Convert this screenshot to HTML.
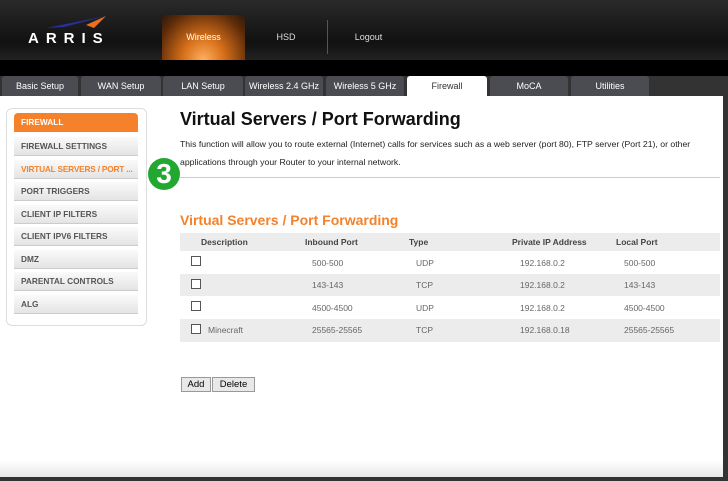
<!DOCTYPE html>
<html><head><style>
*{margin:0;padding:0;box-sizing:border-box}
body{width:728px;height:481px;overflow:hidden;background:#fff;font-family:"Liberation Sans",Arial,sans-serif;position:relative}
.abs{position:absolute}
.hdr{left:0;top:0;width:728px;height:60px;background:linear-gradient(#2a2a2a,#111 70%,#222)}
.band{left:0;top:60px;width:728px;height:16px;background:#000}
.tabrow{left:0;top:76px;width:728px;height:20px;background:#333}
.tab{position:absolute;top:76px;height:20px;background:#4a4c52;color:#fff;font-size:9px;text-align:center;line-height:21px;border-radius:3px 3px 0 0}
.tab.on{background:#fff;color:#333}
.nav{position:absolute;top:15px;height:44px;color:#ddd;font-size:9px;text-align:center;line-height:44px}
.side{left:6px;top:108px;width:141px;height:218px;border:1px solid #ddd;border-radius:6px;background:#fff}
.it{position:absolute;left:14px;width:124px;height:19px;background:linear-gradient(#fafafa,#e4e4e4);border-bottom:1px solid #ccc;font-size:8.3px;font-weight:bold;color:#555;line-height:19px;padding-left:7px;white-space:nowrap;overflow:hidden}
.tr{position:absolute;left:180px;width:540px;font-size:8.5px;color:#666}
.tr span{position:absolute}
.cb{position:absolute;left:11px;width:10px;height:10px;border:1px solid #555;background:#fff}
</style></head><body>
<div class="abs hdr"></div>
<div class="abs" style="left:162px;top:15px;width:83px;height:45px;background:radial-gradient(ellipse at 50% 100%,#ffb060 0%,#d8701a 35%,#5a2a08 80%,#2a1a10 100%)"></div>
<div class="nav" style="left:162px;width:83px;color:#fff">Wireless</div>
<div class="nav" style="left:245px;width:82px">HSD</div>
<div class="abs" style="left:327px;top:20px;width:1px;height:34px;background:#555"></div>
<div class="nav" style="left:327px;width:83px">Logout</div>
<svg class="abs" style="left:44px;top:14px" width="64" height="16"><path d="M2 14 L62 2 L20 13 Z" fill="#2a2fa0"/><path d="M42 11 L62 2 L50 14 Z" fill="#e87020"/></svg>
<div class="abs" style="left:28px;top:30px;color:#fff;font-size:15px;font-weight:bold;letter-spacing:7px">ARRIS</div>
<div class="abs band"></div>
<div class="abs tabrow"></div>
<div class="tab" style="left:2px;width:76px">Basic Setup</div>
<div class="tab" style="left:81px;width:80px">WAN Setup</div>
<div class="tab" style="left:163px;width:80px">LAN Setup</div>
<div class="tab" style="left:245px;width:78px">Wireless 2.4 GHz</div>
<div class="tab" style="left:326px;width:78px">Wireless 5 GHz</div>
<div class="tab on" style="left:407px;width:80px">Firewall</div>
<div class="tab" style="left:490px;width:78px">MoCA</div>
<div class="tab" style="left:571px;width:78px">Utilities</div>
<div class="abs" style="left:723px;top:96px;width:5px;height:385px;background:#333"></div>
<div class="abs" style="left:0;top:460px;width:723px;height:17px;background:linear-gradient(#fff,#e8e8e8)"></div>
<div class="abs" style="left:0;top:477px;width:728px;height:4px;background:#333"></div>
<div class="abs side"></div>
<div class="it" style="top:113px;background:#f5822a;color:#fff;border-radius:4px 4px 0 0;border:none">FIREWALL</div>
<div class="it" style="top:137px">FIREWALL SETTINGS</div>
<div class="it" style="top:160px;color:#f5822a;letter-spacing:-0.2px">VIRTUAL SERVERS / PORT ...</div>
<div class="it" style="top:182px">PORT TRIGGERS</div>
<div class="it" style="top:205px">CLIENT IP FILTERS</div>
<div class="it" style="top:227px">CLIENT IPV6 FILTERS</div>
<div class="it" style="top:250px">DMZ</div>
<div class="it" style="top:272px">PARENTAL CONTROLS</div>
<div class="it" style="top:295px">ALG</div>
<div class="abs" style="left:148px;top:158px;width:32px;height:32px;border-radius:50%;background:#22a830;color:#fff;font-size:28px;font-weight:bold;text-align:center;line-height:32px">3</div>
<div class="abs" style="left:180px;top:109px;font-size:18px;font-weight:bold;color:#111">Virtual Servers / Port Forwarding</div>
<div class="abs" style="left:180px;top:135px;width:545px;font-size:8.7px;line-height:18px;color:#222">This function will allow you to route external (Internet) calls for services such as a web server (port 80), FTP server (Port 21), or other applications through your Router to your internal network.</div>
<div class="abs" style="left:180px;top:177px;width:540px;height:1px;background:#ccc"></div>
<div class="abs" style="left:180px;top:212px;font-size:14px;font-weight:bold;color:#f5822a">Virtual Servers / Port Forwarding</div>
<div class="tr" style="top:233px;height:18px;background:#ececec;font-weight:bold;color:#444"><span style="left:21px;top:4px">Description</span><span style="left:125px;top:4px">Inbound Port</span><span style="left:229px;top:4px">Type</span><span style="left:332px;top:4px">Private IP Address</span><span style="left:436px;top:4px">Local Port</span></div>
<div class="tr" style="top:251px;height:23px"><div class="cb" style="top:5px"></div><span style="left:132px;top:7px">500-500</span><span style="left:236px;top:7px">UDP</span><span style="left:340px;top:7px">192.168.0.2</span><span style="left:444px;top:7px">500-500</span></div>
<div class="tr" style="top:274px;height:22px;background:#ececec"><div class="cb" style="top:5px"></div><span style="left:132px;top:6px">143-143</span><span style="left:236px;top:6px">TCP</span><span style="left:340px;top:6px">192.168.0.2</span><span style="left:444px;top:6px">143-143</span></div>
<div class="tr" style="top:296px;height:23px"><div class="cb" style="top:5px"></div><span style="left:132px;top:7px">4500-4500</span><span style="left:236px;top:7px">UDP</span><span style="left:340px;top:7px">192.168.0.2</span><span style="left:444px;top:7px">4500-4500</span></div>
<div class="tr" style="top:319px;height:23px;background:#ececec"><div class="cb" style="top:5px"></div><span style="left:28px;top:6px">Minecraft</span><span style="left:132px;top:6px">25565-25565</span><span style="left:236px;top:6px">TCP</span><span style="left:340px;top:6px">192.168.0.18</span><span style="left:444px;top:6px">25565-25565</span></div>
<div class="abs" style="left:181px;top:377px;width:30px;height:15px;border:1px solid #999;background:#e8e8e8;font-size:9.5px;text-align:center;line-height:13px">Add</div>
<div class="abs" style="left:212px;top:377px;width:43px;height:15px;border:1px solid #999;background:#e8e8e8;font-size:9.5px;text-align:center;line-height:13px">Delete</div>
</body></html>
